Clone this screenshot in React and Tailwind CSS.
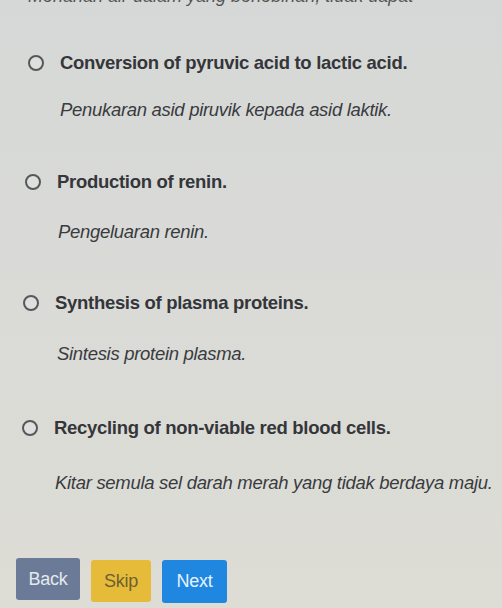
import React from 'react'

const options = [
  {
    en: 'Conversion of pyruvic acid to lactic acid.',
    ms: 'Penukaran asid piruvik kepada asid laktik.',
    rowClass: 'mt-[46px] pl-[28px]',
    msClass: 'mt-[25px] pl-[60px]',
  },
  {
    en: 'Production of renin.',
    ms: 'Pengeluaran renin.',
    rowClass: 'mt-[50px] pl-[25px]',
    msClass: 'mt-[28px] pl-[58px]',
  },
  {
    en: 'Synthesis of plasma proteins.',
    ms: 'Sintesis protein plasma.',
    rowClass: 'mt-[49px] pl-[23px]',
    msClass: 'mt-[29px] pl-[57px]',
  },
  {
    en: 'Recycling of non-viable red blood cells.',
    ms: 'Kitar semula sel darah merah yang tidak berdaya maju.',
    rowClass: 'mt-[52px] pl-[22px]',
    msClass: 'mt-[33px] pl-[55px]',
  },
]

function Radio() {
  return (
    <span className="w-[16px] h-[16px] rounded-full border-2 border-[#55585b] bg-[#dfe0de] shrink-0" />
  )
}

export default function App() {
  return (
    <div
      className="w-[502px] h-[608px] overflow-hidden bg-gradient-to-b from-[#d6d8d7] via-[#dadbd7] to-[#dddcd5] text-[#34363a]"
      style={{ fontFamily: '"Liberation Sans", Arial, sans-serif' }}
    >
      <div className="h-[6px] overflow-hidden pl-[28px]">
        <div className="italic text-[18px] leading-[20px] mt-[-14px] text-[#555]">
          Menahan air dalam yang berlebihan, tidak dapat
        </div>
      </div>

      {options.map((o) => (
        <div key={o.en}>
          <div className={`flex items-center gap-[16px] h-[22px] ${o.rowClass}`}>
            <Radio />
            <span className="font-bold text-[18.5px] tracking-[-0.3px] leading-none">{o.en}</span>
          </div>
          <div className={`h-[22px] flex items-center italic text-[18.5px] tracking-[-0.3px] text-[#393b3f] ${o.msClass}`}>
            {o.ms}
          </div>
        </div>
      ))}

      <div className="flex items-start mt-[64px] pl-[16px] gap-[11px]">
        <button className="w-[64px] h-[42px] rounded-[3px] bg-[#6b7b97] text-[#e4e9f0] text-[18px] tracking-[-0.3px]">
          Back
        </button>
        <button className="w-[60px] h-[42px] mt-[2px] rounded-[3px] bg-[#e6bb3a] text-[#6f5f30] text-[18px] tracking-[-0.3px]">
          Skip
        </button>
        <button className="w-[65px] h-[43px] mt-[2px] rounded-[3px] bg-[#1f87df] text-[#e6f3ff] text-[18px] tracking-[-0.3px]">
          Next
        </button>
      </div>
    </div>
  )
}
